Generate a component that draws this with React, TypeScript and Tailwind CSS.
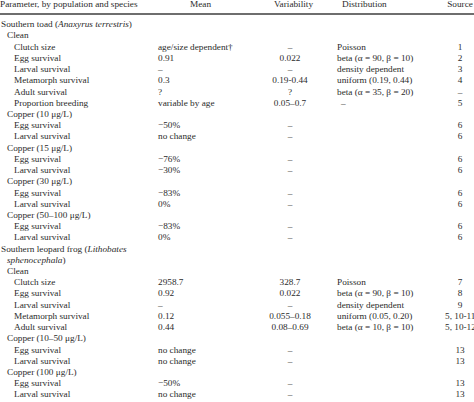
import React from "react";

type Row = {
	p: React.ReactNode;
	lvl: 0 | 1 | 2;
	mean?: string;
	vari?: string;
	dist?: string;
	src?: string;
};

const rows: Row[] = [
	{ p: <>Southern toad (<i>Anaxyrus terrestris</i>)</>, lvl: 0 },
	{ p: "Clean", lvl: 1 },
	{ p: "Clutch size", lvl: 2, mean: "age/size dependent†", vari: "–", dist: "Poisson", src: "1" },
	{ p: "Egg survival", lvl: 2, mean: "0.91", vari: "0.022", dist: "beta (α = 90, β = 10)", src: "2" },
	{ p: "Larval survival", lvl: 2, mean: "–", vari: "–", dist: "density dependent", src: "3" },
	{ p: "Metamorph survival", lvl: 2, mean: "0.3", vari: "0.19-0.44", dist: "uniform (0.19, 0.44)", src: "4" },
	{ p: "Adult survival", lvl: 2, mean: "?", vari: "?", dist: "beta (α = 35, β = 20)", src: "–" },
	{ p: "Proportion breeding", lvl: 2, mean: "variable by age", vari: "0.05–0.7", dist: "–", src: "5" },
	{ p: "Copper (10 μg/L)", lvl: 1 },
	{ p: "Egg survival", lvl: 2, mean: "−50%", vari: "–", src: "6" },
	{ p: "Larval survival", lvl: 2, mean: "no change", vari: "–", src: "6" },
	{ p: "Copper (15 μg/L)", lvl: 1 },
	{ p: "Egg survival", lvl: 2, mean: "−76%", vari: "–", src: "6" },
	{ p: "Larval survival", lvl: 2, mean: "−30%", vari: "–", src: "6" },
	{ p: "Copper (30 μg/L)", lvl: 1 },
	{ p: "Egg survival", lvl: 2, mean: "−83%", vari: "–", src: "6" },
	{ p: "Larval survival", lvl: 2, mean: "0%", vari: "–", src: "6" },
	{ p: "Copper (50–100 μg/L)", lvl: 1 },
	{ p: "Egg survival", lvl: 2, mean: "−83%", vari: "–", src: "6" },
	{ p: "Larval survival", lvl: 2, mean: "0%", vari: "–", src: "6" },
	{ p: <>Southern leopard frog (<i>Lithobates</i></>, lvl: 0 },
	{ p: <><i>sphenocephala</i>)</>, lvl: 1 },
	{ p: "Clean", lvl: 1 },
	{ p: "Clutch size", lvl: 2, mean: "2958.7", vari: "328.7", dist: "Poisson", src: "7" },
	{ p: "Egg survival", lvl: 2, mean: "0.92", vari: "0.022", dist: "beta (α = 90, β = 10)", src: "8" },
	{ p: "Larval survival", lvl: 2, mean: "–", vari: "–", dist: "density dependent", src: "9" },
	{ p: "Metamorph survival", lvl: 2, mean: "0.12", vari: "0.055–0.18", dist: "uniform (0.05, 0.20)", src: "5, 10-11" },
	{ p: "Adult survival", lvl: 2, mean: "0.44", vari: "0.08–0.69", dist: "beta (α = 10, β = 10)", src: "5, 10-12" },
	{ p: "Copper (10–50 μg/L)", lvl: 1 },
	{ p: "Egg survival", lvl: 2, mean: "no change", vari: "–", src: "13" },
	{ p: "Larval survival", lvl: 2, mean: "no change", vari: "–", src: "13" },
	{ p: "Copper (100 μg/L)", lvl: 1 },
	{ p: "Egg survival", lvl: 2, mean: "−50%", vari: "–", src: "13" },
	{ p: "Larval survival", lvl: 2, mean: "no change", vari: "–", src: "13" },
];

const indent = ["pl-[1px]", "pl-[7px]", "pl-[14px]"];

const grid = "grid grid-cols-[158px_97px_70px_120px_30px] h-[11.23px] leading-[11.23px] whitespace-nowrap";

const App = () => {
	return (
		<div
			className="w-[474px] h-[402px] overflow-hidden bg-white text-[#2b2b2b] text-[9.25px]"
			style={{ fontFamily: '"Liberation Serif", "Times New Roman", serif' }}
		>
			<div className={`${grid} mt-[-1.5px]`}>
				<div>Parameter, by population and species</div>
				<div className="pl-[32px]">Mean</div>
				<div className="text-center pl-[7px]">Variability</div>
				<div className="pl-[17px]">Distribution</div>
				<div className="text-center">Source</div>
			</div>
			<div className="mt-[3.5px] h-[1.5px] w-full bg-[#6e6e6e]" />
			<div className="pt-[4.5px]">
				{rows.map((r, i) => (
					<div key={i} className={grid}>
						<div className={indent[r.lvl]}>{r.p}</div>
						<div>{r.mean}</div>
						<div className="text-center">{r.vari}</div>
						<div className={r.dist === "–" ? "pl-[16px]" : "pl-[12px]"}>{r.dist}</div>
						<div className="text-center overflow-visible">{r.src}</div>
					</div>
				))}
			</div>
		</div>
	);
};

export default App;
